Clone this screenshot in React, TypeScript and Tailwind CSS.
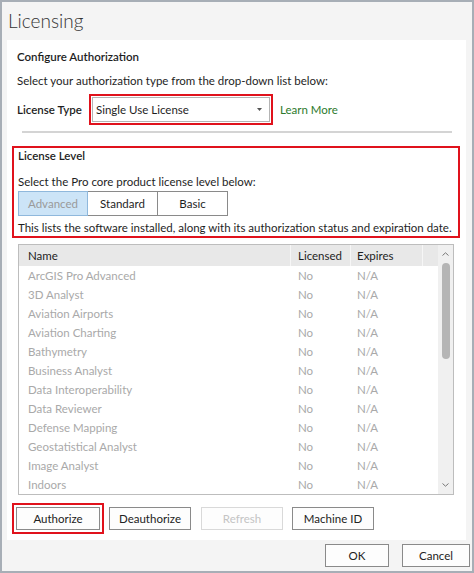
import React from "react"

const rows = [
  "ArcGIS Pro Advanced",
  "3D Analyst",
  "Aviation Airports",
  "Aviation Charting",
  "Bathymetry",
  "Business Analyst",
  "Data Interoperability",
  "Data Reviewer",
  "Defense Mapping",
  "Geostatistical Analyst",
  "Image Analyst",
  "Indoors",
]

function Btn({ children, disabled, className = "" }: { children: React.ReactNode; disabled?: boolean; className?: string }) {
  return (
    <div
      className={`flex h-[23px] items-center justify-center border bg-[#fdfdfd] ${
        disabled ? "border-[#d9d9d9] text-[#c4c4c4]" : "border-[#8a8a8a] text-[#222]"
      } ${className}`}
    >
      {children}
    </div>
  )
}

export default function App() {
  return (
    <div className="flex h-[573px] w-[474px] flex-col border-2 border-[#a7aeb6] bg-[#f4f4f4] font-['Lato',sans-serif] text-[11.5px] text-[#1e1e1e]">
      <div className="flex h-[38px] shrink-0 items-center pl-[6px] text-[19px] font-light text-[#333]">Licensing</div>

      <div className="ml-[5px] flex w-[459px] shrink-0 flex-col bg-white pb-[6px] pl-[5px]">
        <div className="mt-[9px] h-[16px] pl-[5px] font-semibold leading-[16px]">Configure Authorization</div>
        <div className="mt-[8px] h-[16px] pl-[5px] leading-[16px]">Select your authorization type from the drop-down list below:</div>

        <div className="mt-[5px] flex h-[31px] items-center pl-[5px]">
          <span className="w-[72px] font-semibold">License Type</span>
          <div className="w-[184px] border-2 border-[#e0121c] p-[1px]">
            <div className="flex h-[25px] items-center justify-between border border-[#b4b4b4] pl-[3px] pr-[7px]">
              <span>Single Use License</span>
              <svg width="5" height="3" viewBox="0 0 5 3">
                <path d="M0 0h5L2.5 3z" fill="#555" />
              </svg>
            </div>
          </div>
          <span className="ml-[7px] text-[#2d7a2d]">Learn More</span>
        </div>

        <div className="ml-[10px] mt-[6px] h-[2px] w-[430px] bg-[#d4d4d4]" />

        <div className="mt-[13px] flex h-[92px] w-[448px] flex-col border-2 border-[#e0121c] pl-[4px]">
          <div className="h-[16px] font-semibold leading-[16px]">License Level</div>
          <div className="mt-[10px] h-[16px] leading-[16px]">Select the Pro core product license level below:</div>
          <div className="mt-[1px] flex h-[25px]">
            <div className="flex w-[70px] items-center justify-center border border-[#8fb8dc] bg-[#cce4f7] text-[#9a9a9a]">Advanced</div>
            <div className="flex w-[70px] items-center justify-center border border-l-0 border-[#8a8a8a]">Standard</div>
            <div className="flex w-[70px] items-center justify-center border border-l-0 border-[#8a8a8a]">Basic</div>
          </div>
          <div className="mt-[4px] h-[16px] whitespace-nowrap leading-[16px]">
            This lists the software installed, along with its authorization status and expiration date.
          </div>
        </div>

        <div className="ml-[6px] mt-[6px] flex h-[251px] w-[436px] border border-[#bdbdbd]">
          <div className="flex flex-1 flex-col">
            <div className="flex h-[21px] shrink-0 bg-[#e8e8e8]">
              <div className="flex w-[272px] items-center border-r border-[#f6f6f6] pl-[9px]">Name</div>
              <div className="flex w-[60px] items-center border-r border-[#f6f6f6] pl-[7px]">Licensed</div>
              <div className="flex w-[72px] items-center border-r border-[#f6f6f6] pl-[6px]">Expires</div>
              <div className="flex-1" />
            </div>
            {rows.map((r) => (
              <div key={r} className="flex h-[19px] items-center text-[#a9a9a9]">
                <div className="w-[272px] pl-[9px]">{r}</div>
                <div className="w-[60px] pl-[7px]">No</div>
                <div className="w-[72px] pl-[6px]">N/A</div>
              </div>
            ))}
          </div>
          <div className="flex w-[15px] flex-col items-center bg-[#f0f0f0]">
            <svg className="mt-[7px]" width="7" height="4" viewBox="0 0 7 4">
              <path d="M0.5 3.5L3.5 0.8L6.5 3.5" fill="none" stroke="#777" strokeWidth="1" />
            </svg>
            <div className="mt-[7px] h-[96px] w-[8px] rounded-full bg-[#b5b5b5]" />
            <div className="flex-1" />
            <svg className="mb-[7px]" width="7" height="4" viewBox="0 0 7 4">
              <path d="M0.5 0.5L3.5 3.2L6.5 0.5" fill="none" stroke="#777" strokeWidth="1" />
            </svg>
          </div>
        </div>

        <div className="mt-[8px] flex items-center">
          <div className="border-2 border-[#e0121c] p-[2px]">
            <Btn className="w-[84px]">Authorize</Btn>
          </div>
          <Btn className="ml-[5px] w-[82px]">Deauthorize</Btn>
          <Btn disabled className="ml-[10px] w-[82px]">Refresh</Btn>
          <Btn className="ml-[9px] w-[82px]">Machine ID</Btn>
        </div>
      </div>

      <div className="flex flex-1 items-center justify-end gap-[13px] pr-[2px]">
        <Btn className="w-[64px]">OK</Btn>
        <Btn className="w-[68px]">Cancel</Btn>
      </div>
    </div>
  )
}
